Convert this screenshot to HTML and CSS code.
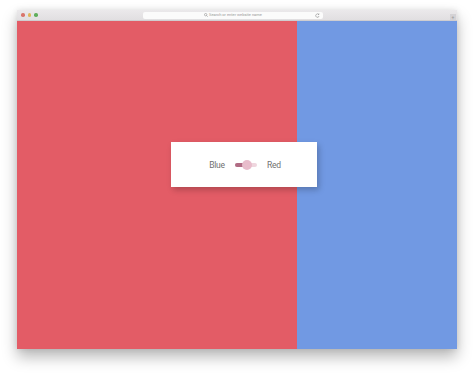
FILE: index.html
```html
<!DOCTYPE html>
<html>
<head>
<meta charset="utf-8">
<link rel="stylesheet" href="styles.css">
</head>
<body>
<div class="window">
  <div class="titlebar">
    <div class="dots">
      <span class="dot dot-red"></span>
      <span class="dot dot-yellow"></span>
      <span class="dot dot-green"></span>
    </div>
    <div class="address">
      <span class="search-text"><svg class="mag" viewBox="0 0 6 6" width="4" height="4"><circle cx="2.5" cy="2.5" r="1.8" fill="none" stroke="#888" stroke-width="0.8"/><path d="M3.8 3.8 L5.6 5.6" stroke="#888" stroke-width="0.8"/></svg>Search or enter website name</span>
      <svg class="reload" viewBox="0 0 6 6" width="5" height="5"><path d="M4.6 2.2 A2 2 0 1 0 4.8 3.6" fill="none" stroke="#888" stroke-width="0.7"/><path d="M3.6 1.6 L4.8 1.6 L4.8 0.6" fill="none" stroke="#888" stroke-width="0.7"/></svg>
    </div>
    <div class="plus">+</div>
  </div>
  <div class="content">
    <div class="pane pane-red"></div>
    <div class="pane pane-blue"></div>
    <div class="card">
      <span class="label">Blue</span>
      <span class="toggle"><span class="track-fill"></span><span class="thumb"></span></span>
      <span class="label">Red</span>
    </div>
  </div>
</div>
</body>
</html>
```
FILE: styles.css
```css
html, body {
  margin: 0;
  padding: 0;
  background: #ffffff;
  width: 474px;
  height: 373px;
  overflow: hidden;
  font-family: Roboto, "Noto Sans", sans-serif;
}

.window {
  margin: 10px 0 0 17px;
  width: 440px;
  height: 339px;
  box-shadow: 0 8px 14px rgba(0, 0, 0, 0.28), 0 0 6px rgba(0, 0, 0, 0.1);
  display: flex;
  flex-direction: column;
}

.titlebar {
  height: 11px;
  background: linear-gradient(#ebe9eb, #e1dfe1);
  border-bottom: 1px solid #cfcdd0;
  box-sizing: border-box;
  display: flex;
  align-items: center;
  position: relative;
}

.dots {
  display: flex;
  gap: 3px;
  padding-left: 4px;
  width: 122px;
}

.dot {
  width: 3.5px;
  height: 3.5px;
  border-radius: 50%;
}
.dot-red { background: #d9756c; }
.dot-yellow { background: #e0b75a; }
.dot-green { background: #5fae5c; }

.address {
  width: 180px;
  height: 7px;
  background: #fbfbfb;
  border-radius: 2px;
  display: flex;
  align-items: center;
  justify-content: center;
  position: relative;
}

.search-text {
  font-size: 4px;
  color: #9a9a9a;
  display: flex;
  align-items: center;
  gap: 1px;
  line-height: 1;
}

.reload {
  position: absolute;
  right: 3px;
  top: 1px;
}

.plus {
  margin-left: auto;
  width: 6px;
  height: 6px;
  margin-top: 4px;
  margin-right: 1px;
  background: #d4d2d5;
  color: #999;
  font-size: 5px;
  line-height: 6px;
  text-align: center;
}

.content {
  flex: 1;
  display: flex;
  position: relative;
}

.pane-red {
  width: 280px;
  background: #e35c66;
}

.pane-blue {
  flex: 1;
  background: #7199e3;
}

.card {
  position: absolute;
  left: 154px;
  top: 121px;
  width: 146px;
  height: 45px;
  background: #ffffff;
  box-shadow: 2px 3px 6px rgba(0, 0, 0, 0.22);
  display: flex;
  align-items: center;
  justify-content: center;
  gap: 9px;
  padding-left: 2px;
  box-sizing: border-box;
}

.label {
  font-size: 8.5px;
  color: #707070;
  letter-spacing: -0.2px;
}

.toggle {
  position: relative;
  width: 22px;
  height: 4px;
  border-radius: 2px;
  background: #efd6de;
  margin: 0 1px;
}

.track-fill {
  position: absolute;
  left: 0;
  top: 0;
  width: 11px;
  height: 4px;
  border-radius: 2px;
  background: #b06c84;
}

.thumb {
  position: absolute;
  left: 7px;
  top: -3px;
  width: 10px;
  height: 10px;
  border-radius: 50%;
  background: #e8bccb;
}
```
